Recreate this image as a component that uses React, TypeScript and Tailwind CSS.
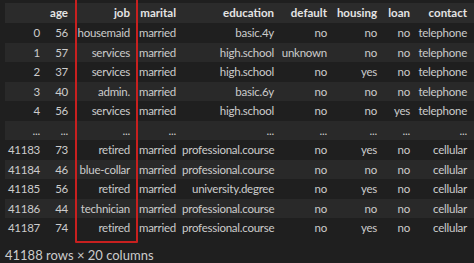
const columns = ["", "age", "job", "marital", "education", "default", "housing", "loan", "contact"];

const rows: string[][] = [
  ["0", "56", "housemaid", "married", "basic.4y", "no", "no", "no", "telephone"],
  ["1", "57", "services", "married", "high.school", "unknown", "no", "no", "telephone"],
  ["2", "37", "services", "married", "high.school", "no", "yes", "no", "telephone"],
  ["3", "40", "admin.", "married", "basic.6y", "no", "no", "no", "telephone"],
  ["4", "56", "services", "married", "high.school", "no", "no", "yes", "telephone"],
  ["...", "...", "...", "...", "...", "...", "...", "...", "..."],
  ["41183", "73", "retired", "married", "professional.course", "no", "yes", "no", "cellular"],
  ["41184", "46", "blue-collar", "married", "professional.course", "no", "no", "no", "cellular"],
  ["41185", "56", "retired", "married", "university.degree", "no", "yes", "no", "cellular"],
  ["41186", "44", "technician", "married", "professional.course", "no", "no", "no", "cellular"],
  ["41187", "74", "retired", "married", "professional.course", "no", "yes", "no", "cellular"],
];

const gridCols =
  "grid grid-cols-[41px_28px_62px_46px_98px_53px_50px_33px_57px] h-[19.5px] items-center";

export default function App() {
  return (
    <div
      className="relative w-[474px] h-[263px] overflow-hidden bg-[#1f1f1f] text-[#cccccc] text-[11.5px] leading-none"
      style={{ fontFamily: 'Lato, "Noto Sans", sans-serif' }}
    >
      <div className="pt-[3px] pl-[5px]">
        {/* header */}
        <div className={`${gridCols} h-[20px] bg-[#2b2b2b] font-bold text-[#e4e4e4]`}>
          {columns.map((c, i) => (
            <div key={i} className="text-right pr-[6px] whitespace-nowrap">
              {c}
            </div>
          ))}
        </div>
        {rows.map((r, ri) => (
          <div key={ri} className={`${gridCols} ${ri % 2 === 1 ? "bg-[#292929]" : "bg-[#1f1f1f]"}`}>
            {r.map((cell, ci) => (
              <div key={ci} className="text-right pr-[6px] whitespace-nowrap tracking-[-0.25px]">
                {cell}
              </div>
            ))}
          </div>
        ))}
        <div className="mt-[11px] text-[13px] text-[#cccccc]">41188 rows × 20 columns</div>
      </div>

      {/* highlight box around the job column */}
      <div className="absolute left-[75px] top-[-3px] w-[63px] h-[246px] border-[2.5px] border-[#c8201f] rounded-[1px]" />
    </div>
  );
}
